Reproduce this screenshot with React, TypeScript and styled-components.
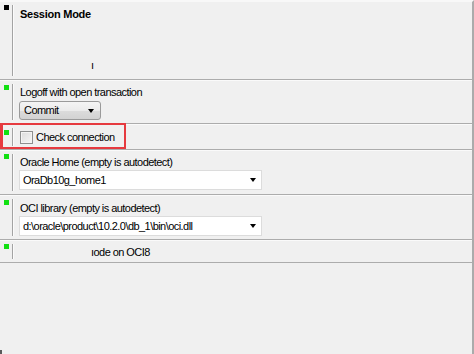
import React from "react";
import styled, { createGlobalStyle } from "styled-components";

const GlobalStyle = createGlobalStyle`
  body {
    margin: 0;
    background: #f0f0f0;
    font-family: "Liberation Sans", Arial, sans-serif;
    font-size: 11px;
    color: #000;
  }
`;

const Frame = styled.div`
  width: 474px;
  height: 354px;
  box-sizing: border-box;
  border-top: 2px solid #f8f8f8;
  border-right: 2px solid #ababab;
  background: #f0f0f0;
  position: relative;
  overflow: hidden;
`;

const Row = styled.div<{ $h: number }>`
  position: relative;
  display: grid;
  grid-template-columns: 12px 1px 1fr;
  height: ${(p) => p.$h}px;
  box-sizing: border-box;
  border-bottom: 1px solid #acacac;
  border-top: 1px solid #fafafa;
  &:first-child {
    border-top: none;
  }
`;

const Marker = styled.span<{ $color: string; $top: number }>`
  display: block;
  width: 5px;
  height: 5px;
  margin: ${(p) => p.$top}px 0 0 4px;
  background: ${(p) => p.$color};
`;

const Divider = styled.div`
  margin: 3px 0;
  background: #a3a3a3;
  box-shadow: 1px 0 0 #fbfbfb;
`;

const Content = styled.div<{ $top: number }>`
  display: flex;
  flex-direction: column;
  align-items: flex-start;
  padding: ${(p) => p.$top}px 0 0 7px;
  letter-spacing: -0.55px;
`;

const Title = styled.div`
  font-weight: bold;
  font-size: 11px;
  line-height: 13px;
  letter-spacing: -0.25px;
`;

const Label = styled.div`
  line-height: 13px;
  white-space: nowrap;
`;

const Stray = styled.div<{ $left: number; $top: number }>`
  line-height: 13px;
  margin: ${(p) => p.$top}px 0 0 ${(p) => p.$left}px;
  white-space: nowrap;
`;

const Arrow = styled.span`
  width: 0;
  height: 0;
  border-left: 3.5px solid transparent;
  border-right: 3.5px solid transparent;
  border-top: 4px solid #000;
`;

const DropButton = styled.div`
  margin: 2px 0 0 -1px;
  width: 82px;
  height: 19px;
  box-sizing: border-box;
  display: flex;
  align-items: center;
  justify-content: space-between;
  padding: 0 6px 0 4px;
  border: 1px solid #9a9a9a;
  border-radius: 3px;
  background: linear-gradient(#f4f4f4 0%, #ebebeb 50%, #dcdcdc 51%, #d2d2d2 100%);
  line-height: 13px;
`;

const Combo = styled.div`
  margin: 1px 0 0 -1px;
  width: 243px;
  height: 20px;
  box-sizing: border-box;
  display: flex;
  align-items: center;
  justify-content: space-between;
  padding: 0 5px 0 3px;
  border: 1px solid #dcdcdc;
  background: #fff;
  line-height: 13px;
  white-space: nowrap;
`;

const CheckRow = styled.label`
  display: flex;
  align-items: center;
  gap: 3px;
  line-height: 13px;
`;

const CheckBox = styled.span`
  width: 13px;
  height: 13px;
  box-sizing: border-box;
  border: 1px solid #8e8f8f;
  background: linear-gradient(135deg, #dcdcdc, #f6f6f6);
  box-shadow: inset 0 0 0 1px #f4f4f4;
`;

const Highlight = styled.div`
  position: absolute;
  left: 0;
  top: -2px;
  width: 126px;
  height: 26px;
  box-sizing: border-box;
  border: 2px solid #e63a3f;
  border-left-width: 3px;
  pointer-events: none;
`;

const CornerMark = styled.div`
  position: absolute;
  left: 0;
  bottom: 0;
  width: 2px;
  height: 4px;
  background: #5a5a5a;
`;

const GREEN = "#12e012";

export default function App() {
  return (
    <>
      <GlobalStyle />
      <Frame>
        <Row $h={78}>
          <Marker $color="#000" $top={3} />
          <Divider />
          <Content $top={6}>
            <Title>Session Mode</Title>
            <Stray $left={71} $top={38}>ı</Stray>
          </Content>
        </Row>
        <Row $h={44}>
          <Marker $color={GREEN} $top={4} />
          <Divider />
          <Content $top={5}>
            <Label>Logoff with open transaction</Label>
            <DropButton>
              <span>Commit</span>
              <Arrow />
            </DropButton>
          </Content>
        </Row>
        <Row $h={26}>
          <Highlight />
          <Marker $color={GREEN} $top={5} />
          <Divider />
          <Content $top={6}>
            <CheckRow>
              <CheckBox />
              <span>Check connection</span>
            </CheckRow>
          </Content>
        </Row>
        <Row $h={45}>
          <Marker $color={GREEN} $top={3} />
          <Divider />
          <Content $top={5}>
            <Label>Oracle Home (empty is autodetect)</Label>
            <Combo>
              <span>OraDb10g_home1</span>
              <Arrow />
            </Combo>
          </Content>
        </Row>
        <Row $h={45}>
          <Marker $color={GREEN} $top={4} />
          <Divider />
          <Content $top={6}>
            <Label>OCI library (empty is autodetect)</Label>
            <Combo>
              <span>d:\oracle\product\10.2.0\db_1\bin\oci.dll</span>
              <Arrow />
            </Combo>
          </Content>
        </Row>
        <Row $h={23}>
          <Marker $color={GREEN} $top={3} />
          <Divider />
          <Content $top={5}>
            <Stray $left={71} $top={0}>ıode on OCI8</Stray>
          </Content>
        </Row>
        <CornerMark />
      </Frame>
    </>
  );
}
